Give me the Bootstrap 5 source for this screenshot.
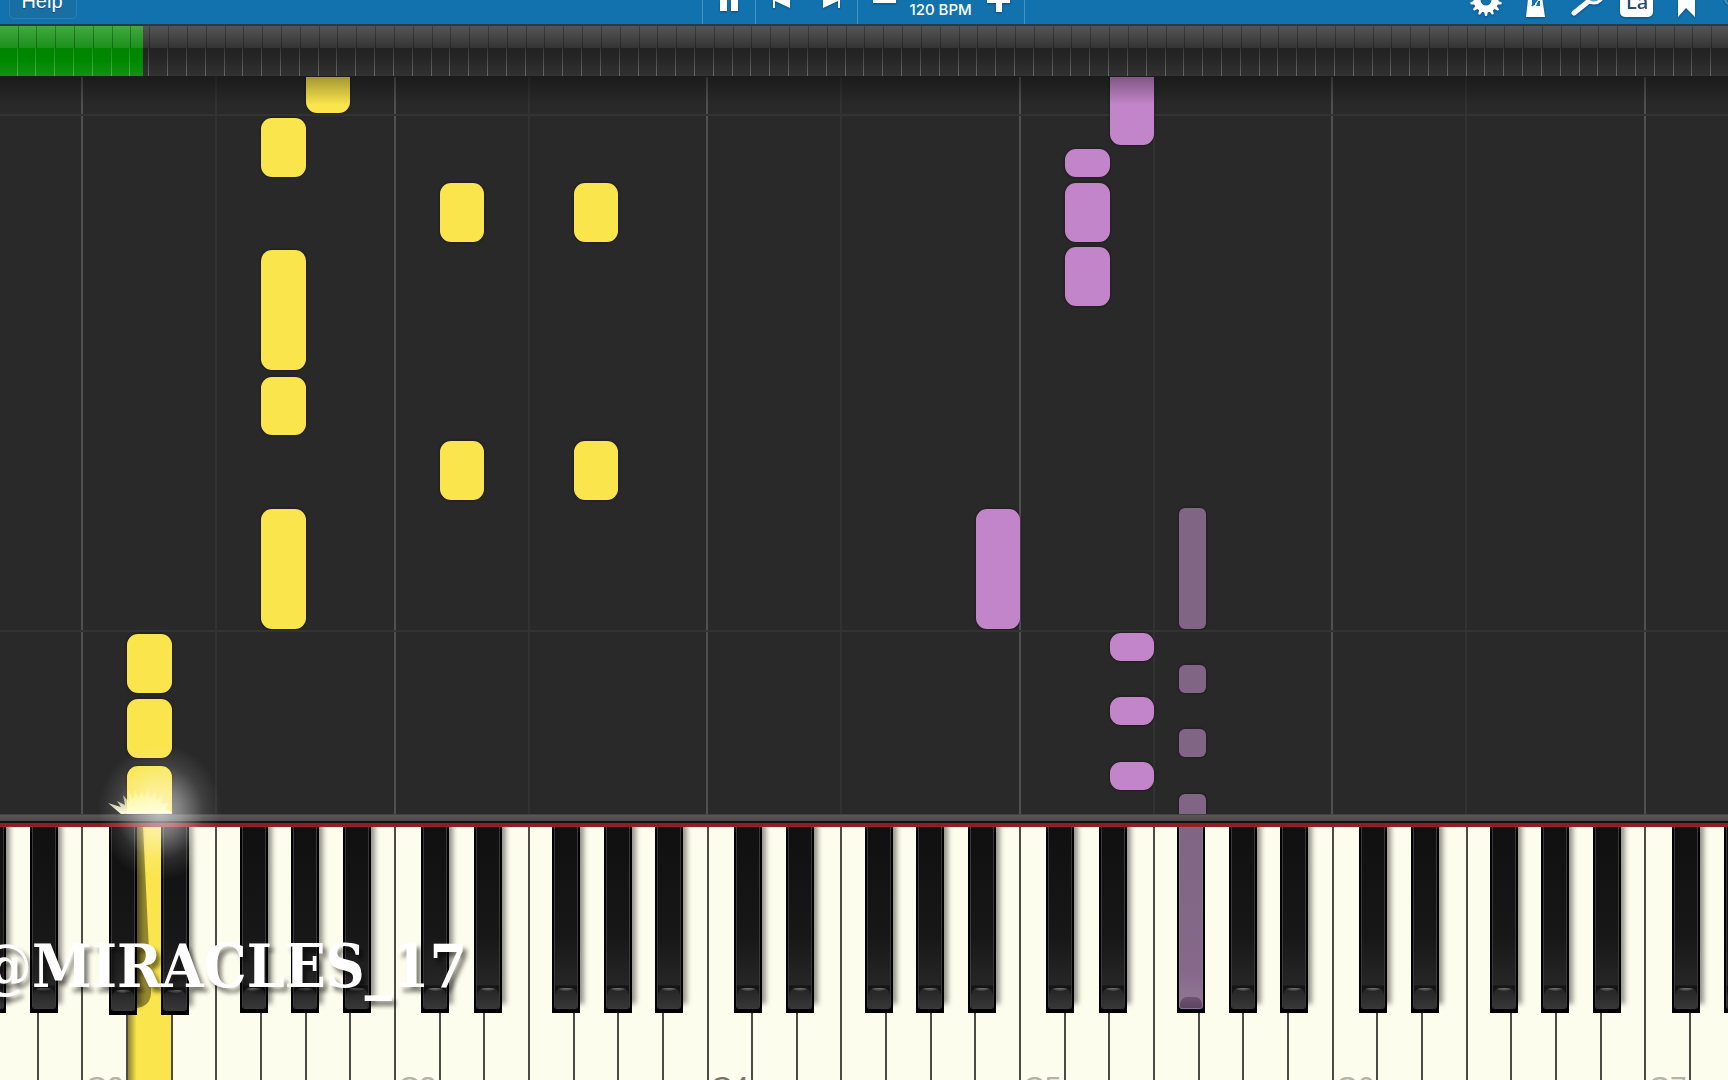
<!DOCTYPE html>
<html lang="en">
<head>
<meta charset="utf-8">
<meta name="viewport" content="width=device-width, initial-scale=1">
<title>Piano roll</title>
<link href="https://cdn.jsdelivr.net/npm/bootstrap@5.3.0/dist/css/bootstrap.min.css" rel="stylesheet">
<style>
  :root { --oct: calc(100vw * 312.6 / 1728); --key: calc(var(--oct) / 7); }
  body { background: #292929; font-family: "Liberation Sans", Arial, sans-serif; }
  .topbar { height: 24px; background: #1272ad; color: #fff; }
  .topbar svg { display: block; fill: #fff; filter: drop-shadow(0 1px 1px rgba(0,40,80,.5)); }
  .help-btn { width: 68px; height: 40px; margin-left: 9px; margin-bottom: 5px; padding: 3px 2px 0 0; font-size: 20px; line-height: 24px; color: #fff; background: #186fa4; border: 1px solid #2c7fb3; border-radius: 5px; text-shadow: 0 1px 1px rgba(0,40,80,.5); }
  .tool-btn { height: 24px; padding: 0; border: 0; background: none; color: #fff; display: flex; justify-content: center; }
  .transport { left: 40.6%; width: 323px; height: 24px; border-left: 1px solid #4691c0; border-right: 1px solid #4691c0; }
  .cell { width: 53px; }
  .cell-pair { width: 103px; padding: 0 14px; border-left: 1px solid #4691c0; border-right: 1px solid #4691c0; }
  .cell-tempo { width: 167px; padding: 0 13px; }
  .bpm { font: 500 15px/18px Inter, sans-serif; padding-top: 1px; }
  .tools { right: 0; width: 260px; height: 24px; }
  .timeline { height: 53px; border-top: 2px solid #273a45; border-bottom: 1px solid #1c1c1c; background: linear-gradient(#555 0, #343434 44%, #222 45%, #242424 60%, #323232 100%); }
  .played { width: calc(100vw * 143 / 1728); background: linear-gradient(#41a841 0, #1d911d 43%, #008500 45%, #008800 70%, #139213 100%); }
  .tick { top: 0; bottom: 0; width: 2px; background: linear-gradient(90deg, transparent 50%, rgba(0,0,0,.28) 50%) top / 100% 44% no-repeat, linear-gradient(rgba(255,255,255,.1), rgba(255,255,255,.26)) bottom left / 1px 56% no-repeat; }
  .roll { background: #292929; }
  .roll::after { content: ""; position: absolute; inset: 0 0 auto 0; height: 28px; background: linear-gradient(rgba(0,0,0,.34), rgba(0,0,0,0)); }
  .gridline { top: 0; bottom: 0; width: 2px; background: #323232; }
  .gridline.is-c { background: #505050; }
  .measure { left: 0; right: 0; height: 2px; background: #333; }
  .note { width: var(--key); border-radius: 11px; box-shadow: 0 0 2px 1px rgba(20,0,20,.3); }
  .note-l { background: #fae54c; }
  .note-r { background: #c385c9; }
  .note-s { width: 27px; border-radius: 6px; background: #806584; }
  .fall { height: 12px; background: linear-gradient(#393939 0, #565656 12%, #494949 55%, #3f3f3f 56%, #111 60%, #111 74%, #8e1f24 75%, #8e1f24 100%); z-index: 2; }
  .keyboard { height: 254px; background: #fdfded; border-top: 1px solid #9a1d22; }
  .wkey { top: 0; bottom: 0; width: var(--key); padding: 0; border: 0; border-left: 2px solid #4c4c46; background: #fdfded; color: #b5b3a6; font-size: 30px; line-height: 34px; text-align: left; }
  .wkey span { position: absolute; left: 2px; top: 243px; }
  .wkey.mid { color: #77756b; }
  .wkey.down { background: linear-gradient(90deg, #8f8330 0, #c3b33d 10%, #fae54c 20%); }
  .bkey { top: 0; width: 28px; height: 186px; padding: 0; border: 0; background: #000; box-shadow: 5px -8px 5px -1px rgba(0,0,0,.42); }
  .bkey::before { content: ""; position: absolute; inset: 0 2px 4px 2px; border: 1px solid #3a3a3a; border-top: 0; border-radius: 0 0 3px 3px; background: linear-gradient(#101010, #171717 60%, #262626 87%, #151515 88%); }
  .bkey::after { content: ""; position: absolute; left: 3px; right: 3px; bottom: 5px; height: 20px; border-radius: 7px 7px 2px 2px; background: radial-gradient(ellipse 9px 3px at 50% 0, #777 0, #444 80%, transparent 100%), linear-gradient(#242424, #373737); }
  .bkey.near { height: 188px; }
  .bkey.down { box-shadow: none; }
  .bkey.down::before { border-color: #8c7290; background: linear-gradient(#806584, #86698a 80%, #957999); }
  .bkey.down::after { height: 11px; background: linear-gradient(#705376, #5d4362); }
  .key-shade { left: calc(100vw * 137 / 1728); top: 0; }
  .glow { left: calc(100vw * 60 / 1728); bottom: 160px; z-index: 3; pointer-events: none; }
  .handle { left: -22px; bottom: 74px; z-index: 4; font: 700 60px/80px "DejaVu Serif Condensed", "DejaVu Serif", serif; color: #fff; text-shadow: 4px 5px 4px rgba(0,0,0,.5); white-space: nowrap; }
</style>
<script src="https://cdn.jsdelivr.net/npm/bootstrap@5.3.0/dist/js/bootstrap.bundle.min.js"></script>
</head>
<body class="vh-100 overflow-hidden d-flex flex-column position-relative">
<header class="topbar position-relative flex-shrink-0 overflow-hidden d-flex align-items-end">
  <button class="help-btn d-flex align-items-center justify-content-center" type="button">Help</button>
  <div class="transport position-absolute top-0 d-flex">
    <button class="tool-btn cell" type="button" aria-label="Pause"><svg width="20" height="24"><path d="M1-4h7v15H1zM12-4h7v15h-7z"/></svg></button>
    <div class="cell-pair d-flex justify-content-between">
      <button class="tool-btn" type="button" aria-label="Previous"><svg width="22" height="24"><path d="M3-8h2v6L20-10V8L5 1v7H3z"/></svg></button>
      <button class="tool-btn" type="button" aria-label="Next"><svg width="22" height="24"><path d="M19-8h-2v6L2-10V8l15-7v7h2z"/></svg></button>
    </div>
    <div class="cell-tempo d-flex justify-content-between">
      <button class="tool-btn" type="button" aria-label="Slower"><svg width="26" height="24"><path d="M2-2h23v5H2z"/></svg></button>
      <div class="bpm">120 BPM</div>
      <button class="tool-btn" type="button" aria-label="Faster"><svg width="26" height="24"><path d="M2-3h9v-9h6v9h8v6h-8v9h-6V3H2z"/></svg></button>
    </div>
  </div>
  <div class="tools position-absolute top-0">
    <svg width="260" height="24" role="img" aria-label="Tools">
      <g id="gear" transform="translate(18 0)"><circle r="9" fill="none" stroke="#fff" stroke-width="7"/></g>
      <path d="M61-10h12l4 27H58z"/><path d="M64 6l7-9" stroke="#1272ad" stroke-width="2"/><path d="M64-3h3v8h-3zM70 1h2v5h-4z" fill="#1272ad"/>
      <path d="M106 13l15-12" stroke="#fff" stroke-width="5" stroke-linecap="round"/><circle cx="126" cy="-6" r="9" fill="#5ba0ca" stroke="#fff" stroke-width="3"/>
      <rect x="152" y="-15" width="33" height="32" rx="5"/>
      <text x="158" y="9" font-family="Open Sans, sans-serif" font-size="20" font-weight="600" fill="#26506d">La</text>
      <path d="M210-10h17v27l-9-9-8 9z"/>
      <path d="M257-2q0 4 3 6" fill="none" stroke="#4691c0" stroke-width="2"/>
    </svg>
  </div>
</header>
<div class="timeline position-relative flex-shrink-0 overflow-hidden" id="timeline"><div class="played h-100"></div></div>
<main class="roll position-relative flex-grow-1 overflow-hidden" id="roll"></main>
<div class="fall position-relative flex-shrink-0"></div>
<section class="keyboard position-relative flex-shrink-0 overflow-hidden" id="keyboard" aria-label="Piano"></section>
<svg class="glow position-absolute" width="180" height="180" viewBox="0 0 180 180" aria-hidden="true">
  <defs><radialGradient id="halo"><stop offset="0" stop-color="#fff" stop-opacity=".62"/><stop offset=".35" stop-color="#fff" stop-opacity=".4"/><stop offset=".7" stop-color="#fff" stop-opacity=".11"/><stop offset="1" stop-color="#fff" stop-opacity="0"/></radialGradient>
  <linearGradient id="spark" x2="0" y2="1"><stop offset="0" stop-color="#fffbb0" stop-opacity=".4"/><stop offset="1" stop-color="#ffffdf"/></linearGradient></defs>
  <ellipse cx="100" cy="72" rx="62" ry="68" fill="url(#halo)"/>
  <path d="M61 74 48 63l13 4-4-6 8 4-2-10 6 7-1-12 5 9 2-9 3 8 4-7 2 6 5-9 1 10 6-7v9l7-5-2 9 8-1-4 6 8 4z" fill="url(#spark)"/>
</svg>
<div class="handle position-absolute">@MIRACLES_17</div>
<script>
  const px = n => `calc(100vw * ${n} / 1728)`;
  const add = (parent, tag, cls, style, html = "") => {
    const el = document.createElement(tag);
    el.className = cls + " position-absolute";
    Object.assign(el.style, style);
    el.innerHTML = html;
    document.getElementById(parent).append(el);
    return el;
  };
  // gear teeth
  document.getElementById("gear").insertAdjacentHTML("beforeend",
    Array.from({length: 14}, (_, i) => `<path d="M-2 11h4l-1 5h-2z" transform="rotate(${i * 360 / 14})"/>`).join(""));
  for (let i = 0; i < 92; i++) add("timeline", "span", "tick", {left: px(16.5 + i * 18.82)});
  // roll grid: a line at every C and F
  for (let o = 0; o < 6; o++) {
    add("roll", "span", "gridline is-c", {left: px(81 + o * 312.6)});
    add("roll", "span", "gridline", {left: px(215 + o * 312.6)});
  }
  [37, 553].forEach(y => add("roll", "span", "measure", {top: y + "px"}));
  // notes: [hand, white-key index from C2, top, height]; s = sharp
  const notes = [
    ["l",5,-20,56],["l",4,41,59],["l",8,106,59],["l",11,106,59],["l",4,173,120],["l",4,300,58],
    ["l",8,364,59],["l",11,364,59],["l",4,432,120],["l",1,557,59],["l",1,622,59],["l",1,689,80],
    ["r",23,-20,88],["r",22,72,28],["r",22,106,59],["r",22,170,59],["r",20,432,120],
    ["r",23,556,28],["r",23,620,28],["r",23,685,28],
    ["s",24.56,431,121],["s",24.56,588,28],["s",24.56,652,28],["s",24.56,717,60]];
  notes.forEach(([h, k, y, len]) => add("roll", "div", "note note-" + h, {left: px(82.4 + k * 312.6 / 7), top: y + "px", height: len + "px"}));
  // white keys A1..C7, labelled at each C
  for (let k = -2; k < 37; k++) {
    const c = k >= 0 && k % 7 === 0, o = 2 + k / 7;
    add("keyboard", "button", "wkey" + (k === 1 ? " down" : "") + (c && o === 4 ? " mid" : ""),
      {left: px(81.3 + k * 312.6 / 7)}, c ? `<span>C${o}</span>` : "").type = "button";
  }
  document.getElementById("keyboard").insertAdjacentHTML("beforeend",
    '<svg class="key-shade position-absolute" width="20" height="189" aria-hidden="true"><path d="M0 0h6l8 165q0 14-14 16z" fill="#948830"/></svg>');
  for (let o = -1; o < 6; o++) [27.5, 79.9, 158.5, 210, 261.5].forEach((x, i) => {
    const left = 81 + o * 312.6 + x;
    if (left < -28 || left > 1728) return;
    add("keyboard", "button", "bkey" + (o === 0 && i < 2 ? " near" : "") + (o === 3 && i === 2 ? " down" : ""), {left: px(left)}).type = "button";
  });
</script>
</body>
</html>
